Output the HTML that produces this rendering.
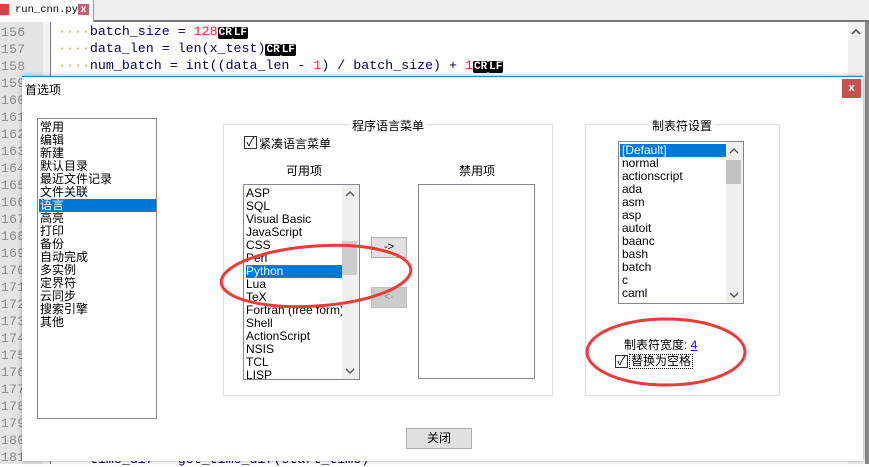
<!DOCTYPE html>
<html><head><meta charset="utf-8"><style>
*{margin:0;padding:0;box-sizing:border-box}
body{width:869px;height:464px;position:relative;overflow:hidden;background:#fff;font-family:"Liberation Sans","Noto Sans CJK SC",sans-serif;font-size:12px;color:#000}
.a{position:absolute}
.ln{position:absolute;left:0;width:43px;text-align:left;padding-left:1px;font-family:"Liberation Mono",monospace;font-size:13px;color:#8a8a8a;letter-spacing:0.3px}
.code{position:absolute;left:58px;font-family:"Liberation Mono",monospace;font-size:13.3px;color:#000060;white-space:pre}
.dot{color:#f0a040}
.n{color:#ff2020}
.crlf{background:#000;color:#fff;font-size:11px;font-weight:bold;padding:0 1px;border-radius:2px}
.lst div{height:13px;line-height:13px;white-space:nowrap}
.sel{background:#0078d7;color:#fff}
.grp{position:absolute;border:1px solid #dcdcdc}
.gt{position:absolute;background:#fff;padding:0 3px;top:-8px;font-size:12px}
.box{position:absolute;border:1px solid #828790;background:#fff;overflow:hidden}
.lst .sb{position:absolute;top:0;bottom:0;right:0;width:17px;height:auto;background:#f0f0f0}
.cb{position:absolute;width:13px;height:13px;border:1px solid #333;background:#fff}
</style></head><body>
<div class="a" style="left:0;top:0;width:869px;height:22px;background:#eeeeee;border-bottom:2px solid #777"></div>
<div class="a" style="left:0;top:0;width:94px;height:22px;background:#fff;border-right:1px solid #999"></div>
<div class="a" style="left:0;top:4px;width:9px;height:11px;background:#e04040"></div>
<div class="a" style="left:15px;top:4px;font-family:'Liberation Mono',monospace;font-size:10.5px">run_cnn.py</div>
<div class="a" style="left:78px;top:4px;width:11px;height:11px;background:#c06070;color:#fff;font-size:10px;line-height:11px;text-align:center;font-weight:bold">x</div>
<div class="a" style="left:0;top:22px;width:43px;height:442px;background:#e4e4e4"></div>
<div class="a" style="left:43px;top:22px;width:7px;height:442px;background:#f2f2f2"></div>
<div class="a" style="left:50px;top:22px;width:1px;height:442px;background:#777"></div>
<div class="a" style="left:848px;top:22px;width:17px;height:442px;background:#f0f0f0"></div>
<div class="a" style="left:865px;top:22px;width:4px;height:442px;background:#888"></div>
<svg class="a" style="left:851px;top:28px" width="10" height="8"><path d="M1 6 L5 2 L9 6" fill="none" stroke="#555" stroke-width="1.6"/></svg>
<div class="ln" style="top:25px">156</div><div class="ln" style="top:42px">157</div><div class="ln" style="top:59px">158</div><div class="ln" style="top:76px">159</div><div class="ln" style="top:93px">160</div><div class="ln" style="top:110px">161</div><div class="ln" style="top:127px">162</div><div class="ln" style="top:144px">163</div><div class="ln" style="top:161px">164</div><div class="ln" style="top:178px">165</div><div class="ln" style="top:195px">166</div><div class="ln" style="top:212px">167</div><div class="ln" style="top:229px">168</div><div class="ln" style="top:246px">169</div><div class="ln" style="top:263px">170</div><div class="ln" style="top:280px">171</div><div class="ln" style="top:297px">172</div><div class="ln" style="top:314px">173</div><div class="ln" style="top:331px">174</div><div class="ln" style="top:348px">175</div><div class="ln" style="top:365px">176</div><div class="ln" style="top:382px">177</div><div class="ln" style="top:399px">178</div><div class="ln" style="top:416px">179</div><div class="ln" style="top:433px">180</div><div class="ln" style="top:450px">181</div>
<div class="code" style="top:24px"><span class="dot">····</span>batch_size = <span class="n">128</span><span class="crlf">CR</span><span class="crlf">LF</span></div>
<div class="code" style="top:41px"><span class="dot">····</span>data_len = len(x_test)<span class="crlf">CR</span><span class="crlf">LF</span></div>
<div class="code" style="top:58px"><span class="dot">····</span>num_batch = int((data_len - <span class="n">1</span>) / batch_size) + <span class="n">1</span><span class="crlf">CR</span><span class="crlf">LF</span></div>
<div class="code" style="top:452px"><span class="dot">····</span>time_dif = get_time_dif(start_time)</div>
<div class="a" style="left:22px;top:76px;width:841px;height:385px;background:#fff;border-top:1px solid #1883d7;box-shadow:0 0 4px rgba(0,0,0,.35)"></div>
<div class="a" style="left:25px;top:81px;font-size:12px">首选项</div>
<div class="a" style="left:842px;top:79px;width:19px;height:19px;background:#c75050;color:#fff;font-size:11px;font-weight:bold;text-align:center;line-height:18px">x</div>
<div class="box lst" style="left:37px;top:118px;width:120px;height:301px;padding:2px 0 0 2px">
<div>常用</div><div>编辑</div><div>新建</div><div>默认目录</div><div>最近文件记录</div><div>文件关联</div><div class="sel" style="margin-left:-1px;padding-left:1px">语言</div><div>高亮</div><div>打印</div><div>备份</div><div>自动完成</div><div>多实例</div><div>定界符</div><div>云同步</div><div>搜索引擎</div><div>其他</div>
</div>
<div class="grp" style="left:223px;top:124px;width:330px;height:272px"><div class="gt" style="left:125px">程序语言菜单</div></div>
<div class="cb" style="left:244px;top:136px;font-size:12px;line-height:10px;text-align:center">✓</div>
<div class="a" style="left:259px;top:135px">紧凑语言菜单</div>
<div class="a" style="left:286px;top:162px">可用项</div>
<div class="a" style="left:459px;top:162px">禁用项</div>
<div class="box lst" style="left:243px;top:184px;width:117px;height:196px;padding:2px 0 0 2px">
<div>ASP</div><div>SQL</div><div>Visual Basic</div><div>JavaScript</div><div>CSS</div><div>Perl</div><div class="sel" style="width:96px">Python</div><div>Lua</div><div>TeX</div><div>Fortran (free form)</div><div>Shell</div><div>ActionScript</div><div>NSIS</div><div>TCL</div><div>LISP</div>
<div class="sb"><div class="a" style="left:0;top:56px;width:15px;height:34px;background:#cdcdcd"></div>
<svg class="a" style="left:3px;top:5px" width="10" height="8"><path d="M1 6 L5 2 L9 6" fill="none" stroke="#555" stroke-width="1.4"/></svg>
<svg class="a" style="left:3px;bottom:4px" width="10" height="8"><path d="M1 2 L5 6 L9 2" fill="none" stroke="#555" stroke-width="1.4"/></svg></div>
</div>
<div class="a" style="left:371px;top:237px;width:36px;height:21px;background:#e1e1e1;border:1px solid #adadad;text-align:center;line-height:19px;font-size:11px">-&gt;</div>
<div class="a" style="left:371px;top:287px;width:36px;height:21px;background:#cccccc;border:1px solid #bfbfbf;text-align:center;line-height:19px;font-size:11px;color:#999">&lt;-</div>
<div class="box" style="left:418px;top:184px;width:117px;height:195px"></div>
<div class="grp" style="left:585px;top:124px;width:195px;height:272px"><div class="gt" style="left:63px">制表符设置</div></div>
<div class="box lst" style="left:618px;top:141px;width:126px;height:163px;padding:2px 0 0 1px">
<div class="sel" style="width:106px;padding-left:2px">[Default]</div><div style="padding-left:2px">normal</div><div style="padding-left:2px">actionscript</div><div style="padding-left:2px">ada</div><div style="padding-left:2px">asm</div><div style="padding-left:2px">asp</div><div style="padding-left:2px">autoit</div><div style="padding-left:2px">baanc</div><div style="padding-left:2px">bash</div><div style="padding-left:2px">batch</div><div style="padding-left:2px">c</div><div style="padding-left:2px">caml</div>
<div class="sb"><div class="a" style="left:0;top:18px;width:15px;height:24px;background:#c0c0c0"></div>
<svg class="a" style="left:3px;top:5px" width="10" height="8"><path d="M1 6 L5 2 L9 6" fill="none" stroke="#555" stroke-width="1.4"/></svg>
<svg class="a" style="left:3px;bottom:4px" width="10" height="8"><path d="M1 2 L5 6 L9 2" fill="none" stroke="#555" stroke-width="1.4"/></svg></div>
</div>
<div class="a" style="left:624px;top:336px">制表符宽度: <span style="color:#0000ee;text-decoration:underline">4</span></div>
<div class="cb" style="left:615px;top:355px;font-size:12px;line-height:10px;text-align:center">✓</div>
<div class="a" style="left:629px;top:354px;border:1px dotted #000;padding:0 1px;line-height:13px">替换为空格</div>
<div class="a" style="left:406px;top:428px;width:66px;height:21px;background:#e1e1e1;border:1px solid #adadad;text-align:center;line-height:19px">关闭</div>
<svg class="a" style="left:0;top:0" width="869" height="464"><ellipse cx="316" cy="276" rx="95" ry="30" fill="none" stroke="#f03a3a" stroke-width="3" transform="rotate(-4 316 276)"/><ellipse cx="666" cy="352" rx="79" ry="33" fill="none" stroke="#f03a3a" stroke-width="3"/></svg>
</body></html>
